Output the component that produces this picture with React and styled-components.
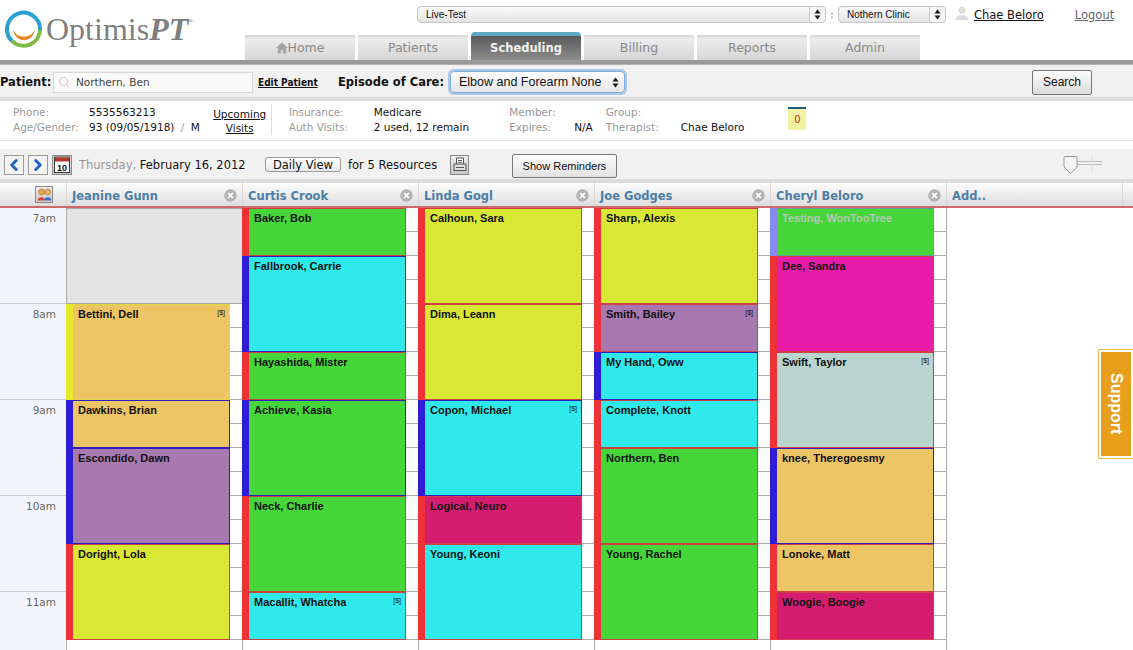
import React from "react";
import styled, { createGlobalStyle } from "styled-components";
import { ChevronLeft, ChevronRight, Search } from "lucide-react";

const GlobalStyle = createGlobalStyle`
  html, body {
    margin: 0;
    padding: 0;
    background: #fff;
    height: 650px;
    overflow: hidden;
  }
  * { box-sizing: border-box; }
`;

const STRIPES = { red: "#ee3338", blue: "#2e1cd6", yellow: "#e8e82c", lav: "#8888ee" };
const BORDERS = { red: "#d04040", blue: "#2a20c0", yellow: "#e0dc3c", lav: "#6a9a9a" };
const FILLS = {
  green: "#46d63a",
  cyan: "#2fe9ea",
  lime: "#d8e835",
  orange: "#eec564",
  purple: "#a878b0",
  pink: "#e81ca8",
  crimson: "#d41c70",
  sage: "#bad4d0",
};

const columns = [
  {
    name: "Jeanine Gunn",
    events: [
      { blocked: true, slots: 4 },
      { name: "Bettini, Dell", slots: 4, fill: "orange", stripe: "yellow", paid: true },
      { name: "Dawkins, Brian", slots: 2, fill: "orange", stripe: "blue" },
      { name: "Escondido, Dawn", slots: 4, fill: "purple", stripe: "blue" },
      { name: "Doright, Lola", slots: 4, fill: "lime", stripe: "red" },
    ],
  },
  {
    name: "Curtis Crook",
    events: [
      { name: "Baker, Bob", slots: 2, fill: "green", stripe: "red" },
      { name: "Fallbrook, Carrie", slots: 4, fill: "cyan", stripe: "blue" },
      { name: "Hayashida, Mister", slots: 2, fill: "green", stripe: "red" },
      { name: "Achieve, Kasia", slots: 4, fill: "green", stripe: "blue" },
      { name: "Neck, Charlie", slots: 4, fill: "green", stripe: "red" },
      { name: "Macallit, Whatcha", slots: 2, fill: "cyan", stripe: "red", paid: true },
    ],
  },
  {
    name: "Linda Gogl",
    events: [
      { name: "Calhoun, Sara", slots: 4, fill: "lime", stripe: "red" },
      { name: "Dima, Leann", slots: 4, fill: "lime", stripe: "red" },
      { name: "Copon, Michael", slots: 4, fill: "cyan", stripe: "blue", paid: true },
      { name: "Logical, Neuro", slots: 2, fill: "crimson", stripe: "red" },
      { name: "Young, Keoni", slots: 4, fill: "cyan", stripe: "red" },
    ],
  },
  {
    name: "Joe Godges",
    events: [
      { name: "Sharp, Alexis", slots: 4, fill: "lime", stripe: "red" },
      { name: "Smith, Bailey", slots: 2, fill: "purple", stripe: "red", paid: true },
      { name: "My Hand, Oww", slots: 2, fill: "cyan", stripe: "blue" },
      { name: "Complete, Knott", slots: 2, fill: "cyan", stripe: "red" },
      { name: "Northern, Ben", slots: 4, fill: "green", stripe: "red" },
      { name: "Young, Rachel", slots: 4, fill: "green", stripe: "red" },
    ],
  },
  {
    name: "Cheryl Beloro",
    events: [
      { name: "Testing, WonTooTree", slots: 2, fill: "green", stripe: "lav", faded: true },
      { name: "Dee, Sandra", slots: 4, fill: "pink", stripe: "red" },
      { name: "Swift, Taylor", slots: 4, fill: "sage", stripe: "red", paid: true },
      { name: "knee, Theregoesmy", slots: 4, fill: "orange", stripe: "blue" },
      { name: "Lonoke, Matt", slots: 2, fill: "orange", stripe: "red" },
      { name: "Woogie, Boogie", slots: 2, fill: "crimson", stripe: "red" },
    ],
  },
];

const hours = ["7am", "8am", "9am", "10am", "11am"];

const Logo = () => (
  <LogoWrap>
    <svg width="40" height="40" viewBox="0 0 40 40">
      <path d="M8 31 A16.5 16.5 0 1 1 36 20" fill="none" stroke="#2a9fd0" strokeWidth="4" />
      <path d="M36 20 A16.5 16.5 0 0 1 8 31" fill="none" stroke="#7fbb42" strokeWidth="4" />
      <path d="M9 19 C11 34 29 34 31 19 C28 29 12 29 9 19 Z" fill="#e8872a" />
    </svg>
    <LogoText>
      Optimis<b>PT</b>
      <sup>®</sup>
    </LogoText>
  </LogoWrap>
);

const SelectArrows = () => (
  <svg width="7" height="11" viewBox="0 0 7 11">
    <path d="M3.5 0.5 L6.5 4.5 H0.5 Z M3.5 10.5 L6.5 6.5 H0.5 Z" fill="#111" />
  </svg>
);

const HomeIcon = () => (
  <svg width="12" height="12" viewBox="0 0 12 12">
    <path d="M6 0.5 L12 6 H10.2 V11.5 H7.2 V8 H4.8 V11.5 H1.8 V6 H0 Z" fill="#a5a5a5" />
  </svg>
);

const UserIcon = () => (
  <svg width="14" height="15" viewBox="0 0 14 15">
    <circle cx="7" cy="4.2" r="3.6" fill="#dcdcdc" />
    <path d="M0.5 14 C1 9.5 4 9 7 9 C10 9 13 9.5 13.5 14 Z" fill="#dcdcdc" />
  </svg>
);

const CalendarIcon = () => (
  <IconFrame $w={20} $h={20}>
    <svg width="16" height="17" viewBox="0 0 16 17">
      <rect x="0.5" y="1" width="15" height="15.5" fill="#fff" stroke="#333" />
      <rect x="1" y="1.5" width="14" height="4" fill="#b5352c" />
      <text x="8" y="15" textAnchor="middle" fontSize="9" fontWeight="700" fontFamily="Liberation Sans, sans-serif" fill="#111">
        10
      </text>
    </svg>
  </IconFrame>
);

const PrinterIcon = () => (
  <IconFrame $w={19} $h={20}>
    <svg width="14" height="15" viewBox="0 0 14 15">
      <path d="M3.5 7 V1 H10.5 V7" fill="#fff" stroke="#555" />
      <rect x="1" y="7" width="12" height="6.5" fill="#ddd" stroke="#555" />
      <path d="M5 3.5 H9 M5 5.3 H9 M3 10.5 H11" stroke="#555" />
    </svg>
  </IconFrame>
);

const PeopleIcon = () => (
  <IconFrame $w={18} $h={17}>
    <svg width="15" height="13" viewBox="0 0 15 13">
      <circle cx="4.6" cy="4" r="3" fill="#e8a64c" stroke="#a8662a" strokeWidth="0.6" />
      <circle cx="10.6" cy="4" r="3" fill="#e8b26c" stroke="#a8662a" strokeWidth="0.6" />
      <path d="M0.5 12.5 C0.5 8 8 8 8 12.5 Z" fill="#d9472f" />
      <path d="M7 12.5 C7 8 14.5 8 14.5 12.5 Z" fill="#3a6fc8" />
    </svg>
  </IconFrame>
);

const CloseIcon = () => (
  <svg width="13" height="13" viewBox="0 0 13 13">
    <circle cx="6.5" cy="6.5" r="6.2" fill="#b4b4b4" />
    <path d="M4.2 4.2 L8.8 8.8 M8.8 4.2 L4.2 8.8" stroke="#fff" strokeWidth="1.7" />
  </svg>
);

const SliderIcon = () => (
  <svg width="42" height="20" viewBox="0 0 42 20">
    <path d="M15 6.5 H40 M15 9.5 H40" stroke="#bbb" />
    <path d="M30 1 V18" stroke="#ddd" />
    <path d="M2 2.5 Q2 1.5 3 1.5 H14 Q15 1.5 15 2.5 V12 L8.5 18.5 L2 12 Z" fill="#f4f4f4" stroke="#999" />
  </svg>
);

const Event = ({ event }) => {
  if (event.blocked) return <Blocked $slots={event.slots} />;
  return (
    <EventRow $slots={event.slots}>
      <Stripe $color={STRIPES[event.stripe]} />
      <EventBody $fill={FILLS[event.fill]} $border={BORDERS[event.stripe]} $faded={event.faded}>
        <span>{event.name}</span>
        {event.paid && <Paid>[$]</Paid>}
      </EventBody>
    </EventRow>
  );
};

const App = () => {
  return (
    <Page>
      <GlobalStyle />
      <Header>
        <Logo />
        <HeaderRight>
          <TopRow>
            <FakeSelect $width={409}>
              <span>Live-Test</span>
              <SelectButton><SelectArrows /></SelectButton>
            </FakeSelect>
            <Colon>:</Colon>
            <FakeSelect $width={108}>
              <span>Nothern Clinic</span>
              <SelectButton><SelectArrows /></SelectButton>
            </FakeSelect>
            <UserBox>
              <UserIcon />
            </UserBox>
            <UserLink>Chae Beloro</UserLink>
            <LogoutLink>Logout</LogoutLink>
          </TopRow>
          <Tabs>
            <Tab><HomeIcon />Home</Tab>
            <Tab>Patients</Tab>
            <Tab $active>Scheduling</Tab>
            <Tab>Billing</Tab>
            <Tab>Reports</Tab>
            <Tab>Admin</Tab>
          </Tabs>
        </HeaderRight>
      </Header>
      <HeaderRule />

      <PatientBar>
        <BarLabel>Patient:</BarLabel>
        <PatientInput>
          <Search size={12} color="#ccc" />
          <span>Northern, Ben</span>
        </PatientInput>
        <EditLink>Edit Patient</EditLink>
        <EpisodeLabel>Episode of Care:</EpisodeLabel>
        <EpisodeSelect>
          <EpisodeValue>Elbow and Forearm None</EpisodeValue>
          <SelectArrows />
        </EpisodeSelect>
        <SearchButton>Search</SearchButton>
      </PatientBar>
      <Strip />

      <InfoRow>
        <InfoGrid $first={76}>
          <Label>Phone:</Label>
          <Value>5535563213</Value>
          <Label>Age/Gender:</Label>
          <Value>93 (09/05/1918) <Slash>/</Slash> M</Value>
        </InfoGrid>
        <VisitsLink>Upcoming<br />Visits</VisitsLink>
        <InfoGrid $first={85} $divider>
          <Label>Insurance:</Label>
          <Value>Medicare</Value>
          <Label>Auth Visits:</Label>
          <Value>2 used, 12 remain</Value>
        </InfoGrid>
        <InfoGrid $first={65} $offset={40}>
          <Label>Member:</Label>
          <Value />
          <Label>Expires:</Label>
          <Value>N/A</Value>
        </InfoGrid>
        <InfoGrid $first={75} $offset={13}>
          <Label>Group:</Label>
          <Value />
          <Label>Therapist:</Label>
          <Value>Chae Beloro</Value>
        </InfoGrid>
        <StickyNote>0</StickyNote>
      </InfoRow>

      <Toolbar>
        <NavButton><ChevronLeft size={18} strokeWidth={4} color="#1a66c0" /></NavButton>
        <NavButton><ChevronRight size={18} strokeWidth={4} color="#1a66c0" /></NavButton>
        <CalendarIcon />
        <DateText><Weekday>Thursday,</Weekday> February 16, 2012</DateText>
        <ViewButton>Daily View</ViewButton>
        <ResourceText>for 5 Resources</ResourceText>
        <PrinterIcon />
        <RemindersButton>Show Reminders</RemindersButton>
        <SliderBox><SliderIcon /></SliderBox>
      </Toolbar>
      <Strip />

      <ColumnHeads>
        <GutterHead><PeopleIcon /></GutterHead>
        {columns.map((col) => (
          <ColumnHead key={col.name}>
            <span>{col.name}</span>
            <CloseIcon />
          </ColumnHead>
        ))}
        <AddHead>Add..</AddHead>
      </ColumnHeads>

      <CalendarBody>
        <Gutter>
          {hours.map((h) => (
            <HourCell key={h}>{h}</HourCell>
          ))}
        </Gutter>
        {columns.map((col) => (
          <Column key={col.name}>
            {col.events.map((event, i) => (
              <Event key={i} event={event} />
            ))}
          </Column>
        ))}
        <EmptyColumn />
      </CalendarBody>

      <SupportTab>Support</SupportTab>
    </Page>
  );
};

export default App;

const Page = styled.div`
  position: relative;
  width: 1133px;
  height: 650px;
  overflow: hidden;
  font-family: "DejaVu Sans", sans-serif;
  color: #111;
`;
const Header = styled.div`
  display: flex;
  height: 60px;
`;
const LogoWrap = styled.div`
  width: 245px;
  flex: none;
  display: flex;
  align-items: flex-start;
  padding: 10px 0 0 4px;
`;
const LogoText = styled.div`
  font-family: "Liberation Serif", serif;
  font-size: 32px;
  line-height: 38px;
  color: #7f7f7f;
  margin-left: 2px;
  b {
    font-style: italic;
    font-weight: 700;
  }
  sup {
    font-size: 7px;
    vertical-align: 17px;
    line-height: 0;
  }
`;
const HeaderRight = styled.div`
  flex: 1;
  display: flex;
  flex-direction: column;
  justify-content: space-between;
`;
const TopRow = styled.div`
  display: flex;
  align-items: center;
  height: 17px;
  margin: 6px 0 0 172px;
`;
const FakeSelect = styled.div`
  width: ${(p) => p.$width}px;
  height: 17px;
  flex: none;
  display: flex;
  justify-content: space-between;
  align-items: center;
  padding-left: 8px;
  border: 1px solid #c4c4c4;
  border-radius: 4px;
  background: linear-gradient(#fafafa, #e4e4e4);
  font-family: "Liberation Sans", sans-serif;
  font-size: 10px;
`;
const SelectButton = styled.div`
  width: 16px;
  height: 15px;
  display: flex;
  align-items: center;
  justify-content: center;
  border-left: 1px solid #ccc;
  background: #f6f6f6;
  border-radius: 0 4px 4px 0;
`;
const Colon = styled.span`
  width: 12px;
  flex: none;
  text-align: center;
  font-size: 10px;
  color: #555;
`;
const UserBox = styled.div`
  display: flex;
  margin: -3px 5px 0 9px;
`;
const UserLink = styled.a`
  font-size: 11.5px;
  color: #111;
  text-decoration: underline;
`;
const LogoutLink = styled.a`
  margin-left: 31px;
  font-size: 11.5px;
  color: #666;
  text-decoration: underline;
`;
const Tabs = styled.div`
  display: flex;
  gap: 3px;
`;
const Tab = styled.div`
  width: 110px;
  display: flex;
  align-items: center;
  justify-content: center;
  font-size: ${(p) => (p.$active ? "11.5px" : "12.5px")};
  height: ${(p) => (p.$active ? "28px" : "25px")};
  margin-top: ${(p) => (p.$active ? "0" : "3px")};
  color: ${(p) => (p.$active ? "#f2f2f2" : "#888")};
  font-weight: ${(p) => (p.$active ? 700 : 400)};
  background: ${(p) =>
    p.$active ? "linear-gradient(#5a5a5a, #8c8c8c)" : "linear-gradient(#d4d4d4 0, #ececec 4px, #d6d6d6)"};
  border-top: ${(p) => (p.$active ? "4px solid #5da9c4" : "none")};
  border-radius: ${(p) => (p.$active ? "4px 4px 0 0" : "0")};
  align-self: flex-end;
`;
const HeaderRule = styled.div`
  height: 5px;
  background: linear-gradient(#999 0, #999 4px, #ccc);
`;
const PatientBar = styled.div`
  height: 32px;
  display: flex;
  align-items: center;
  padding: 2px 41px 0 0;
  background: #f1f1f1;
`;
const BarLabel = styled.div`
  width: 53px;
  flex: none;
  font-size: 11.5px;
  font-weight: 700;
`;
const PatientInput = styled.div`
  width: 200px;
  height: 21px;
  flex: none;
  display: flex;
  align-items: center;
  gap: 6px;
  padding-left: 4px;
  background: #fafafa;
  border: 1px solid #d8d8d8;
  font-size: 10.5px;
  color: #444;
`;
const EditLink = styled.a`
  width: 59px;
  flex: none;
  margin-left: 5px;
  font-family: "DejaVu Sans Condensed", "DejaVu Sans", sans-serif;
  font-size: 10px;
  font-weight: 700;
  text-decoration: underline;
  white-space: nowrap;
`;
const EpisodeLabel = styled.div`
  margin-left: 21px;
  width: 112px;
  flex: none;
  font-size: 11.5px;
  font-weight: 700;
  white-space: nowrap;
`;
const EpisodeSelect = styled.div`
  width: 175px;
  height: 22px;
  flex: none;
  display: flex;
  align-items: center;
  justify-content: space-between;
  padding: 0 5px 0 8px;
  background: linear-gradient(#fdfdfd, #e6e6e6);
  border: 1px solid #7fa8d8;
  border-radius: 4px;
  box-shadow: 0 0 0 2px #a9c8ea;
  font-family: "Liberation Sans", sans-serif;
  font-size: 12.5px;
`;
const EpisodeValue = styled.span`
  width: 142px;
  overflow: hidden;
  white-space: nowrap;
`;
const SearchButton = styled.div`
  width: 60px;
  height: 25px;
  flex: none;
  margin-left: auto;
  display: flex;
  align-items: center;
  justify-content: center;
  background: linear-gradient(#fdfdfd, #dcdcdc);
  border: 1px solid #777;
  border-radius: 2px;
  font-family: "Liberation Sans", sans-serif;
  font-size: 12px;
`;
const Strip = styled.div`
  height: 4px;
  background: #dcdcdc;
`;
const InfoRow = styled.div`
  height: 40px;
  display: flex;
  align-items: flex-start;
  padding: 3px 0 0 13px;
  border-bottom: 1px solid #e4e4e4;
  margin-bottom: 8px;
`;
const InfoGrid = styled.div`
  display: grid;
  grid-template-columns: ${(p) => p.$first}px auto;
  grid-auto-rows: 15px;
  align-items: center;
  height: 31px;
  margin-left: ${(p) => p.$offset || 0}px;
  ${(p) => p.$divider && "border-left: 1px solid #ddd; padding-left: 17px; margin-left: 3px;"}
  font-size: 10.5px;
  white-space: nowrap;
`;
const Label = styled.span`
  color: #999;
`;
const Value = styled.span`
  color: #111;
`;
const Slash = styled.span`
  color: #999;
  margin: 0 3px;
`;
const VisitsLink = styled.a`
  width: 56px;
  margin-left: 12px;
  text-align: center;
  font-size: 10.5px;
  line-height: 14px;
  padding-top: 3px;
  text-decoration: underline;
  white-space: nowrap;
`;
const StickyNote = styled.div`
  width: 18px;
  height: 23px;
  margin: 3px 0 0 44px;
  border-top: 2px solid #1f5d85;
  background: #f3f1a2;
  color: #c0321c;
  font-size: 10px;
  display: flex;
  align-items: center;
  justify-content: center;
`;
const Toolbar = styled.div`
  height: 30px;
  display: flex;
  align-items: center;
  padding: 1px 0 0 4px;
  background: #f1f1f1;
`;
const NavButton = styled.div`
  width: 20px;
  height: 20px;
  flex: none;
  margin-right: 4px;
  display: flex;
  align-items: center;
  justify-content: center;
  background: #f4f4f4;
  border: 1px solid #999;
`;
const IconFrame = styled.div`
  width: ${(p) => p.$w}px;
  height: ${(p) => p.$h}px;
  flex: none;
  display: flex;
  align-items: center;
  justify-content: center;
  background: linear-gradient(#eee, #c9c9c9);
  border: 1px solid #8a8a8a;
`;
const DateText = styled.div`
  margin-left: 7px;
  width: 186px;
  flex: none;
  font-size: 11.5px;
  white-space: nowrap;
`;
const Weekday = styled.span`
  color: #999;
`;
const ViewButton = styled.div`
  width: 76px;
  height: 15px;
  flex: none;
  display: flex;
  align-items: center;
  justify-content: center;
  background: linear-gradient(#fff, #e8e8e8);
  border: 1px solid #999;
  border-radius: 3px;
  font-size: 11.5px;
`;
const ResourceText = styled.div`
  width: 102px;
  flex: none;
  margin-left: 7px;
  font-size: 11.5px;
  white-space: nowrap;
`;
const RemindersButton = styled.div`
  width: 105px;
  height: 24px;
  flex: none;
  margin: 2px 0 0 43px;
  display: flex;
  align-items: center;
  justify-content: center;
  background: linear-gradient(#fdfdfd, #e2e2e2);
  border: 1px solid #777;
  border-radius: 2px;
  font-family: "Liberation Sans", sans-serif;
  font-size: 11px;
`;
const SliderBox = styled.div`
  display: flex;
  margin-left: 445px;
`;
const ColumnHeads = styled.div`
  height: 25px;
  display: flex;
  background: linear-gradient(#fdfdfd, #dddddd);
  border-bottom: 2px solid #cf6a6a;
`;
const GutterHead = styled.div`
  width: 66px;
  flex: none;
  display: flex;
  justify-content: flex-end;
  padding: 3px 13px 0 0;
`;
const ColumnHead = styled.div`
  width: 176px;
  flex: none;
  display: flex;
  justify-content: space-between;
  align-items: flex-start;
  padding: 6px 5px 0 5px;
  border-left: 1px solid #d6d6d6;
  font-size: 11.5px;
  line-height: 15px;
  font-weight: 700;
  color: #4d7ea8;
`;
const AddHead = styled(ColumnHead)`
  width: 177px;
  border-right: 1px solid #d6d6d6;
`;
const CalendarBody = styled.div`
  display: flex;
  height: 442px;
  overflow: hidden;
`;
const Gutter = styled.div`
  width: 66px;
  flex: none;
  background: #f2f6fb;
`;
const HourCell = styled.div`
  height: 96px;
  padding: 4px 10px 0 0;
  text-align: right;
  font-size: 10.5px;
  color: #666;
  border-bottom: 1px solid #ccc;
`;
const Column = styled.div`
  width: 176px;
  flex: none;
  display: flex;
  flex-direction: column;
  align-items: flex-start;
  background:
    linear-gradient(#aaa, #aaa) left top / 1px 100% no-repeat,
    repeating-linear-gradient(#fff 0, #fff 23px, #aaa 23px, #aaa 24px);
`;
const EmptyColumn = styled.div`
  flex: 1;
  border-left: 1px solid #aaa;
`;
const Blocked = styled.div`
  width: 176px;
  flex: none;
  height: ${(p) => p.$slots * 24}px;
  background: #e3e3e3;
  border: 1px solid #aaa;
  border-right: none;
`;
const EventRow = styled.div`
  width: 164px;
  flex: none;
  height: ${(p) => p.$slots * 24}px;
  display: flex;
`;
const Stripe = styled.div`
  width: 7px;
  flex: none;
  background: ${(p) => p.$color};
`;
const EventBody = styled.div`
  flex: 1;
  display: flex;
  justify-content: space-between;
  padding: 3px 4px 0 5px;
  background: ${(p) => p.$fill};
  border: 1px solid ${(p) => p.$border};
  border-left: none;
  font-family: "Liberation Sans", sans-serif;
  font-size: 11px;
  font-weight: 700;
  color: ${(p) => (p.$faded ? "#b5c8b5" : "#111")};
`;
const Paid = styled.span`
  font-size: 7px;
  font-weight: 400;
  margin-top: 1px;
`;
const SupportTab = styled.div`
  position: absolute;
  left: 1098px;
  top: 349px;
  width: 35px;
  height: 110px;
  display: flex;
  align-items: center;
  justify-content: center;
  writing-mode: vertical-rl;
  background: #e8a01c;
  border: 1px solid #e8b84c;
  border-right: none;
  box-shadow: inset 0 0 0 2px #fff;
  border-radius: 2px 0 0 2px;
  color: #fff;
  font-family: "Liberation Sans", sans-serif;
  font-size: 16px;
  font-weight: 700;
`;
